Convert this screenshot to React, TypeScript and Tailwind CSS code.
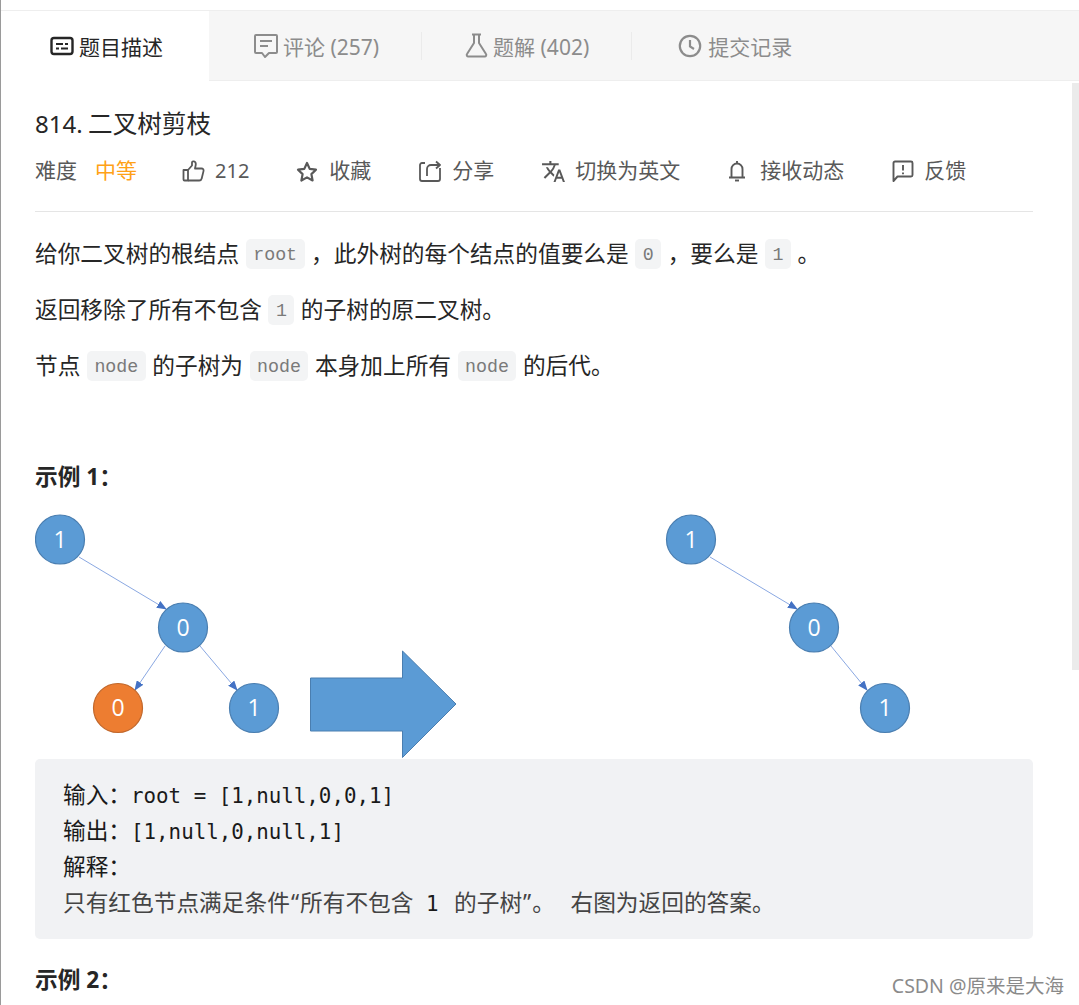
import React from "react";
import { MdOutlineTranslate } from "react-icons/md";

const DescIcon = () => (
  <svg width="24" height="24" viewBox="0 0 24 24" fill="none" stroke="#262626" strokeWidth="2.4">
    <rect x="1.5" y="4" width="21" height="16" rx="2.5" />
    <path d="M6 10h7M15 10h3M6 14.5h3M11 14.5h7" strokeWidth="2" />
  </svg>
);

const CommentIcon = () => (
  <svg width="24" height="26" viewBox="0 0 24 26" fill="none" stroke="#8c8c8c" strokeWidth="2" strokeLinejoin="round">
    <path d="M2 2h20a1 1 0 0 1 1 1v16a1 1 0 0 1-1 1h-7l-4 4-3-4H2a1 1 0 0 1-1-1V3a1 1 0 0 1 1-1z" />
    <path d="M6 8h12M6 13h8" />
  </svg>
);

const FlaskIcon = () => (
  <svg width="23" height="25" viewBox="0 0 23 25" fill="none" stroke="#8c8c8c" strokeWidth="2" strokeLinejoin="round">
    <path d="M7 1.5h9M9 2v8L2 21a1.6 1.6 0 0 0 1.4 2.5h16.2A1.6 1.6 0 0 0 21 21l-7-11V2" />
  </svg>
);

const ClockIcon = () => (
  <svg width="24" height="24" viewBox="0 0 24 24" fill="none" stroke="#8c8c8c" strokeWidth="2.2">
    <circle cx="12" cy="12" r="10.2" />
    <path d="M12 6v6.5l4 2.5" />
  </svg>
);

const ThumbIcon = () => (
  <svg width="23" height="22" viewBox="0 0 23 22" fill="none" stroke="#595959" strokeWidth="1.8" strokeLinejoin="round">
    <path d="M1.5 10h4.5v10.5H2.5a1 1 0 0 1-1-1z" />
    <path d="M6 10l4-4.5V2.5c0-1.8 3.8-1.8 3.8 1.5 0 1.5-.6 3-.8 4.5h6.5c1.6 0 2.4 1.2 2 2.6l-1.8 7.4c-.3 1.2-1 2-2.4 2H6" />
  </svg>
);

const StarIcon = () => (
  <svg width="22" height="21" viewBox="0 0 22 21" fill="none" stroke="#595959" strokeWidth="2.2" strokeLinejoin="round">
    <path d="M11 2l2.7 5.9 6.3.8-4.6 4.4 1.2 6.4L11 16.4l-5.6 3.1 1.2-6.4L2 8.7l6.3-.8z" />
  </svg>
);

const ShareIcon = () => (
  <svg width="22" height="22" viewBox="0 0 22 22" fill="none" stroke="#595959" strokeWidth="1.8" strokeLinejoin="round">
    <path d="M6 3H3a2 2 0 0 0-2 2v14a2 2 0 0 0 2 2h16a2 2 0 0 0 2-2V8" />
    <path d="M8 16v-7a4 4 0 0 1 4-4h8" />
    <path d="M17 1.5l4 3.5-4 3.5" />
  </svg>
);

const BellIcon = () => (
  <svg width="20" height="22" viewBox="0 0 20 22" fill="none" stroke="#595959" strokeWidth="1.9" strokeLinejoin="round">
    <path d="M2 17.5h16M4.5 17.5V9a5.5 5.5 0 0 1 11 0v8.5" />
    <path d="M10 1v2" />
    <path d="M8 20.5h4" />
  </svg>
);

const FeedbackIcon = () => (
  <svg width="22" height="22" viewBox="0 0 22 22" fill="none" stroke="#595959" strokeWidth="1.9" strokeLinejoin="round">
    <path d="M1.5 21V3a1.5 1.5 0 0 1 1.5-1.5h16A1.5 1.5 0 0 1 20.5 3v12a1.5 1.5 0 0 1-1.5 1.5H5.5z" />
    <path d="M11 5v5.5M11 12.5v1.8" />
  </svg>
);

const TreeNode = ({ x, y, v, orange }: { x: number; y: number; v: string; orange?: boolean }) => (
  <g>
    <circle
      cx={x}
      cy={y}
      r="24.5"
      fill={orange ? "#ed7d31" : "#5b9bd5"}
      stroke={orange ? "#c1672b" : "#4a7eb0"}
      strokeWidth="1.2"
    />
    <text x={x} y={y + 8} textAnchor="middle" fill="#fff" fontSize="23" fontFamily="Open Sans, sans-serif">
      {v}
    </text>
  </g>
);

const Edge = ({ x1, y1, x2, y2 }: { x1: number; y1: number; x2: number; y2: number }) => (
  <line x1={x1} y1={y1} x2={x2} y2={y2} stroke="#8aa8e2" strokeWidth="1" markerEnd="url(#arrowHead)" />
);

// two trees with the big arrow between them, image starts at x=35 y=510
const TreeDiagram = () => (
  <svg width="997" height="249" viewBox="0 0 997 249" className="block">
    <defs>
      <marker id="arrowHead" markerWidth="10" markerHeight="8" refX="9" refY="4" orient="auto" markerUnits="userSpaceOnUse">
        <path d="M0 0L10 4L0 8z" fill="#4472c4" />
      </marker>
    </defs>
    <Edge x1={44} y1={47} x2={131} y2={99} />
    <Edge x1={130} y1={136} x2={100} y2={180} />
    <Edge x1={165} y1={136} x2={202} y2={180} />
    <TreeNode x={25} y={29.5} v="1" />
    <TreeNode x={148} y={117.5} v="0" />
    <TreeNode x={83} y={198} v="0" orange />
    <TreeNode x={219} y={198} v="1" />
    <path d="M275.5 168H367.5V141L421 194L367.5 247.5V221H275.5z" fill="#5b9bd5" stroke="#4a7eb0" strokeWidth="1" />
    <Edge x1={675} y1={47} x2={762} y2={99} />
    <Edge x1={796} y1={136} x2={832} y2={180} />
    <TreeNode x={656} y={29.5} v="1" />
    <TreeNode x={779} y={117.5} v="0" />
    <TreeNode x={850} y={198} v="1" />
  </svg>
);

const Code = ({ children }: { children: React.ReactNode }) => (
  <code className="inline-block mx-[6.5px] px-[7.5px] h-[30px] leading-[32px] align-[2px] rounded-[5px] bg-[#f3f4f5] text-[#7a7a7a] text-[18.3px] font-['Liberation_Mono',monospace]">
    {children}
  </code>
);

const Tab = ({ icon, label, className }: { icon: React.ReactNode; label: string; className?: string }) => (
  <div className={`flex items-center text-[21px] text-[#8c8c8c] ${className ?? ""}`}>
    {icon}
    <span className="mt-[4px]">{label}</span>
  </div>
);

const MetaItem = ({ icon, label, className }: { icon: React.ReactNode; label: string; className: string }) => (
  <div className={`flex items-center ${className}`}>
    {icon}
    <span>{label}</span>
  </div>
);

const Cjk = ({ children, gray, className }: { children: React.ReactNode; gray?: boolean; className?: string }) => (
  <span className={`text-[22.7px] font-['Noto_Sans','Noto_Sans_CJK_SC',sans-serif] ${gray ? "text-[#444444]" : ""} ${className ?? ""}`}>
    {children}
  </span>
);

export default function App() {
  return (
    <div className="relative w-[1079px] h-[1005px] overflow-hidden bg-white border-l border-[#9a9a9a] font-['Noto_Sans','Noto_Sans_CJK_SC',sans-serif] text-[#262626]">
      <div className="mt-[10px] h-[71px] flex items-center bg-[#f6f6f6] border-y border-[#eeeeee]">
        <div className="w-[208px] h-[71px] -mt-px flex items-center gap-[5px] pl-[49px] bg-white text-[21px] text-[#262626] border-t border-[#eeeeee]">
          <DescIcon />
          <span className="mt-[4px]">题目描述</span>
        </div>
        <Tab icon={<CommentIcon />} label="评论 (257)" className="ml-[45px] gap-[5px]" />
        <div className="ml-[42px] w-px h-[28px] bg-[#ebebeb]" />
        <Tab icon={<FlaskIcon />} label="题解 (402)" className="ml-[43px] gap-[5px]" />
        <div className="ml-[42px] w-px h-[28px] bg-[#ebebeb]" />
        <Tab icon={<ClockIcon />} label="提交记录" className="ml-[46px] gap-[6px]" />
      </div>

      <div className="pl-[34px] w-[1032px]">
        <h1 className="mt-[26px] h-[34px] leading-[34px] text-[24.6px] font-normal">
          <span className="text-[24px]">814.</span> <span className="-ml-px">二叉树剪枝</span>
        </h1>
        <div className="mt-[13px] h-[34px] flex items-center text-[21px] text-[#595959]">
          <span>难度</span>
          <span className="ml-[18px] text-[#ffa116]">中等</span>
          <MetaItem icon={<ThumbIcon />} label="" className="ml-[45px]" />
          <span className="ml-[10px] text-[20px]">212</span>
          <MetaItem icon={<StarIcon />} label="收藏" className="ml-[47px] gap-[11px]" />
          <MetaItem icon={<ShareIcon />} label="分享" className="ml-[48px] gap-[11px]" />
          <MetaItem icon={<MdOutlineTranslate size={25} />} label="切换为英文" className="ml-[47px] gap-[9px]" />
          <MetaItem icon={<BellIcon />} label="接收动态" className="ml-[47px] gap-[13px]" />
          <MetaItem icon={<FeedbackIcon />} label="反馈" className="ml-[48px] gap-[10px]" />
        </div>
        <div className="mt-[23px] h-px bg-[#e5e5e5]" />

        <div className="text-[22.7px]">
          <p className="mt-[25px] h-[34px] leading-[34px]">
            给你二叉树的根结点<Code>root</Code>，此外树的每个结点的值要么是<Code>0</Code>，要么是<Code>1</Code>。
          </p>
          <p className="mt-[22px] h-[34px] leading-[34px]">
            返回移除了所有不包含<Code>1</Code>的子树的原二叉树。
          </p>
          <p className="mt-[22px] h-[34px] leading-[34px]">
            节点<Code>node</Code>的子树为<Code>node</Code>本身加上所有<Code>node</Code>的后代。
          </p>
          <h3 className="mt-[77px] h-[34px] leading-[34px] font-bold">示例 1：</h3>
          <div className="mt-[16px] h-[249px]">
            <TreeDiagram />
          </div>
          <div className="px-[28px] py-[18px] rounded-[5px] bg-[#f1f2f4] text-[20.8px] leading-[36px] whitespace-pre text-[#1a1a1a] font-['DejaVu_Sans_Mono',monospace]">
            <div className="h-[36px]"><Cjk>输入：</Cjk>root = [1,null,0,0,1]</div>
            <div className="h-[36px]"><Cjk>输出：</Cjk>[1,null,0,null,1]</div>
            <div className="h-[36px]"><Cjk>解释：</Cjk></div>
            <div className="h-[36px]"><Cjk gray>只有红色节点满足条件</Cjk><Cjk gray className="mx-[1px]">“</Cjk><Cjk gray>所有不包含</Cjk> 1 <Cjk gray className="ml-[3px]">的子树</Cjk><Cjk gray className="mx-[1px]">”</Cjk><Cjk gray>。</Cjk> <Cjk gray className="ml-[3px]">右图为返回的答案。</Cjk></div>
          </div>
          <h3 className="mt-[24px] h-[34px] leading-[34px] font-bold">示例 2：</h3>
        </div>
      </div>

      {/* page scrollbar */}
      <div className="absolute right-0 top-[83px] w-[7px] h-[587px] bg-[#ebebeb]" />
      {/* csdn watermark */}
      <div className="absolute right-[15px] top-[971px] text-[19.5px] text-[#8a8a8a]">CSDN @原来是大海</div>
    </div>
  );
}
